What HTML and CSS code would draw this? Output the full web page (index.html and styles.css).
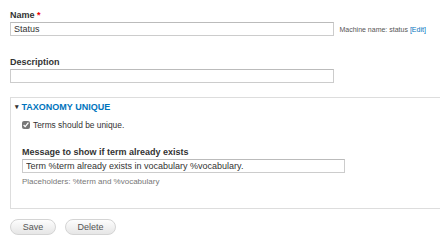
FILE: index.html
```html
<!DOCTYPE html>
<html lang="en">
<head>
    <meta charset="UTF-8">
    <title>Edit vocabulary</title>
    <link rel="stylesheet" href="styles.css">
</head>
<body>
    <form class="vocab-form">
        <div class="form-item form-name">
            <label for="edit-name">Name <span class="required">*</span></label>
            <input type="text" id="edit-name" class="form-text" value="Status">
            <span class="machine-name">Machine name: status <a href="#">[Edit]</a></span>
        </div>

        <div class="form-item form-description">
            <label for="edit-description">Description</label>
            <input type="text" id="edit-description" class="form-text">
        </div>

        <!-- Taxonomy unique settings -->
        <div class="fieldset">
            <div class="legend"><span class="arrow">&#9662;</span> TAXONOMY UNIQUE</div>
            <div class="fieldset-wrapper">
                <div class="form-checkbox">
                    <input type="checkbox" id="edit-unique" checked>
                    <label for="edit-unique">Terms should be unique.</label>
                </div>
                <div class="form-item form-message">
                    <label for="edit-message">Message to show if term already exists</label>
                    <input type="text" id="edit-message" class="form-text wide" value="Term %term already exists in vocabulary %vocabulary.">
                    <div class="description">Placeholders: %term and %vocabulary</div>
                </div>
            </div>
        </div>

        <div class="form-actions">
            <button type="button" class="btn">Save</button>
            <button type="button" class="btn">Delete</button>
        </div>
    </form>
</body>
</html>
```

FILE: styles.css
```css
html, body {
    overflow: hidden;
}
body {
    margin: 0;
    padding: 11px 0 0 10px;
    font-family: "Liberation Sans", Arial, sans-serif;
    color: #333;
    background: #fff;
}
.form-item label {
    display: block;
    font-size: 9px;
    line-height: 9px;
    font-weight: bold;
    color: #333;
    margin-bottom: 2px;
}
.required {
    color: #e00;
}
.form-text {
    box-sizing: border-box;
    width: 324px;
    height: 14px;
    padding: 0 3px;
    border: 1px solid #ccc;
    border-top-color: #bbb;
    font-family: inherit;
    font-size: 9px;
    color: #333;
    vertical-align: top;
    margin: 0;
}
.form-text.wide {
    width: 323px;
}
.machine-name {
    font-size: 7px;
    color: #555;
    line-height: 14px;
    margin-left: 1px;
    vertical-align: top;
    position: relative;
    top: 1px;
}
.machine-name a {
    color: #0074bd;
    text-decoration: none;
}
.form-description {
    margin-top: 18px;
}
.fieldset {
    margin-top: 10px;
    margin-right: -20px;
    border: 1px solid #ddd;
    height: 112px;
    box-sizing: border-box;
    padding: 4px 0 0 4px;
}
.legend {
    font-size: 9px;
    font-weight: bold;
    color: #0074bd;
    line-height: 10px;
}
.arrow {
    color: #333;
    font-size: 7px;
    vertical-align: 1px;
}
.fieldset-wrapper {
    padding-left: 7px;
}
.form-checkbox {
    margin-top: 8px;
    display: flex;
    align-items: center;
    gap: 3px;
    font-size: 8.4px;
    color: #333;
}
.form-checkbox input {
    margin: 0;
    width: 8px;
    height: 8px;
    accent-color: #777;
}
.form-message {
    margin-top: 18px;
}
.description {
    margin-top: 0;
    font-size: 8px;
    color: #777;
}
.form-actions {
    display: flex;
    gap: 9px;
    margin-top: 10px;
}
.btn {
    height: 16px;
    padding: 0 11px;
    border: 1px solid #d4d4d4;
    border-radius: 8px;
    background: linear-gradient(#fdfdfd, #e6e6e6);
    font-family: inherit;
    font-size: 9px;
    color: #555;
}
.btn:first-child {
    width: 46px;
}
.btn:last-child {
    width: 51px;
}
```
